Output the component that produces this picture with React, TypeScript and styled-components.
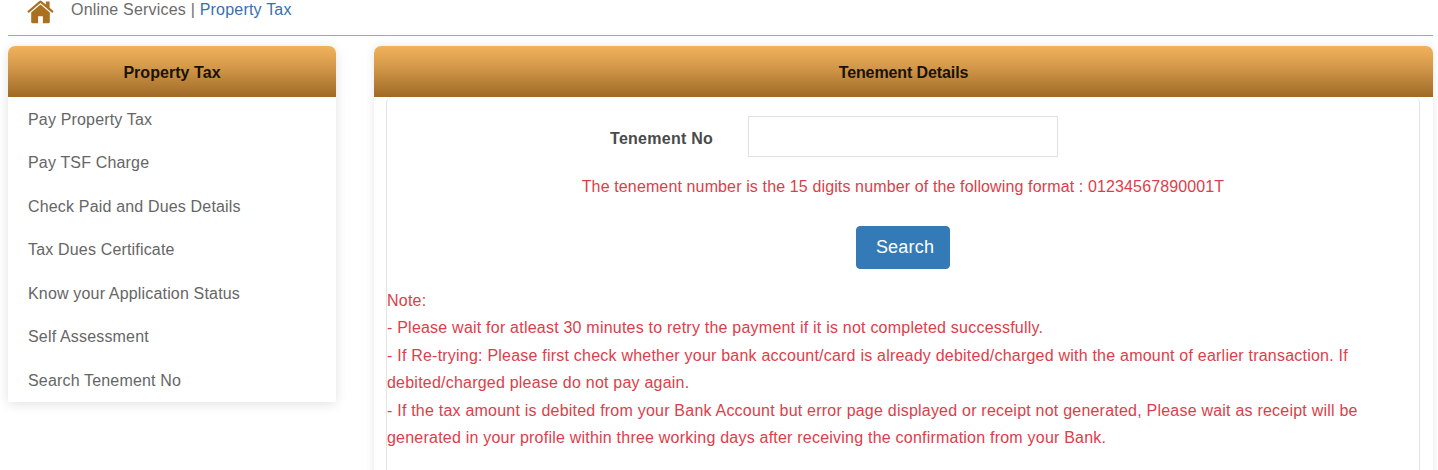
import styled, { createGlobalStyle } from 'styled-components';

const GlobalStyle = createGlobalStyle`
  html, body {
    margin: 0;
    height: 470px;
    overflow: hidden;
    background: #fff;
    font-family: "Liberation Sans", Arial, sans-serif;
  }
`;

const Page = styled.div`
  width: 1438px;
  height: 470px;
  overflow: hidden;
  padding: 0 5px 0 8px;
  box-sizing: border-box;
`;

const Breadcrumb = styled.div`
  display: flex;
  align-items: flex-start;
  height: 36px;
  box-sizing: border-box;
  border-bottom: 1px solid #c4a26f;
  padding-left: 19px;
  font-size: 16px;
  letter-spacing: 0.2px;
  color: #6b6b6b;
`;

const HomeIcon = styled.svg`
  width: 27px;
  height: 24px;
  flex: none;
  margin-right: 17px;
`;

const Crumb = styled.span`
  line-height: 20px;
`;

const CrumbLink = styled.a`
  color: #3a70ad;
`;

const Columns = styled.div`
  display: grid;
  grid-template-columns: 328px 1059px;
  column-gap: 38px;
  margin-top: 10px;
  align-items: start;
`;

const PanelHeader = styled.div<{ $spacing: number }>`
  height: 51px;
  border-radius: 7px 7px 0 0;
  background: linear-gradient(to bottom, #f2b25c 0%, #d4994a 40%, #9f6a26 100%);
  display: flex;
  align-items: center;
  justify-content: center;
  color: #1a1208;
  font-weight: 700;
  font-size: 16px;
  letter-spacing: ${(p) => p.$spacing}px;
  padding-top: 2px;
  box-sizing: border-box;
`;

const Sidebar = styled.aside`
  background: #fff;
  box-shadow: 0 2px 12px rgba(0, 0, 0, 0.12);
  border-radius: 7px 7px 0 0;
`;

const Menu = styled.ul`
  list-style: none;
  margin: 0;
  padding: 0 0 1px;
`;

const MenuItem = styled.li`
  height: 43.45px;
  line-height: 45px;
  padding-left: 20px;
  font-size: 16px;
  letter-spacing: 0.17px;
  color: #666;
`;

const Main = styled.section`
  background: #fff;
  border-radius: 7px 7px 0 0;
  box-shadow: 0 0 10px rgba(0, 0, 0, 0.1);
  height: 500px;
`;

const Body = styled.div`
  margin: 0 13px 0 12px;
  height: 480px;
  border: 1px solid #e4e4e4;
  border-top: none;
  border-radius: 6px;
  box-sizing: border-box;
`;

const FormRow = styled.div`
  display: flex;
  align-items: center;
  padding-top: 19px;
`;

const FieldLabel = styled.label`
  width: 361px;
  padding-right: 35px;
  box-sizing: border-box;
  text-align: right;
  font-weight: 700;
  font-size: 16px;
  letter-spacing: 0.25px;
  color: #4a4a4a;
  padding-top: 5px;
`;

const Field = styled.input`
  width: 310px;
  height: 41px;
  box-sizing: border-box;
  border: 1px solid #e0e0e0;
  background: #fff;
  outline: none;
`;

const Hint = styled.p`
  margin: 20px 0 0;
  text-align: center;
  font-size: 16px;
  line-height: 20px;
  letter-spacing: 0.13px;
  color: #dc3e4a;
`;

const ButtonRow = styled.div`
  display: flex;
  justify-content: center;
  margin-top: 29px;
`;

const SearchButton = styled.button`
  width: 94px;
  height: 43px;
  padding: 0 0 0 4px;
  border: 1px solid #337ab7;
  border-radius: 4px;
  background: #337ab7;
  color: #fff;
  font: 400 18px "Liberation Sans", Arial, sans-serif;
  letter-spacing: 0.2px;
`;

const Notes = styled.div`
  margin-top: 18px;
  font-size: 16px;
  line-height: 27.4px;
  letter-spacing: 0.22px;
  color: #dc3e4a;
`;

const menu = [
  'Pay Property Tax',
  'Pay TSF Charge',
  'Check Paid and Dues Details',
  'Tax Dues Certificate',
  'Know your Application Status',
  'Self Assessment',
  'Search Tenement No',
];

export default function App() {
  return (
    <Page>
      <GlobalStyle />
      <Breadcrumb>
        <HomeIcon viewBox="0 0 27 24">
          <path fill="#a8701f" d="M13.5 4.6 4.2 12.4V22c0 .7.5 1.2 1.2 1.2h5.7v-7h4.8v7h5.7c.7 0 1.2-.5 1.2-1.2v-9.6z" />
          <path fill="#a8701f" d="M26.6 11.2 22.6 7.8V1.6h-3.8v3L14.6 1a1.7 1.7 0 0 0-2.2 0L.4 11.2l1.3 1.8L13.5 3l11.8 10z" />
        </HomeIcon>
        <Crumb>
          Online Services | <CrumbLink>Property Tax</CrumbLink>
        </Crumb>
      </Breadcrumb>
      <Columns>
        <Sidebar>
          <PanelHeader $spacing={0.05}>Property Tax</PanelHeader>
          <Menu>
            {menu.map((item) => (
              <MenuItem key={item}>{item}</MenuItem>
            ))}
          </Menu>
        </Sidebar>
        <Main>
          <PanelHeader $spacing={-0.1}>Tenement Details</PanelHeader>
          <Body>
            <FormRow>
              <FieldLabel>Tenement No</FieldLabel>
              <Field />
            </FormRow>
            <Hint>The tenement number is the 15 digits number of the following format : 01234567890001T</Hint>
            <ButtonRow>
              <SearchButton>Search</SearchButton>
            </ButtonRow>
            <Notes>
              Note:
              <br />- Please wait for atleast 30 minutes to retry the payment if it is not completed successfully.
              <br />- If Re-trying: Please first check whether your bank account/card is already debited/charged with the amount of earlier transaction. If debited/charged please do not pay again.
              <br />- If the tax amount is debited from your Bank Account but error page displayed or receipt not generated, Please wait as receipt will be generated in your profile within three working days after receiving the confirmation from your Bank.
            </Notes>
          </Body>
        </Main>
      </Columns>
    </Page>
  );
}
